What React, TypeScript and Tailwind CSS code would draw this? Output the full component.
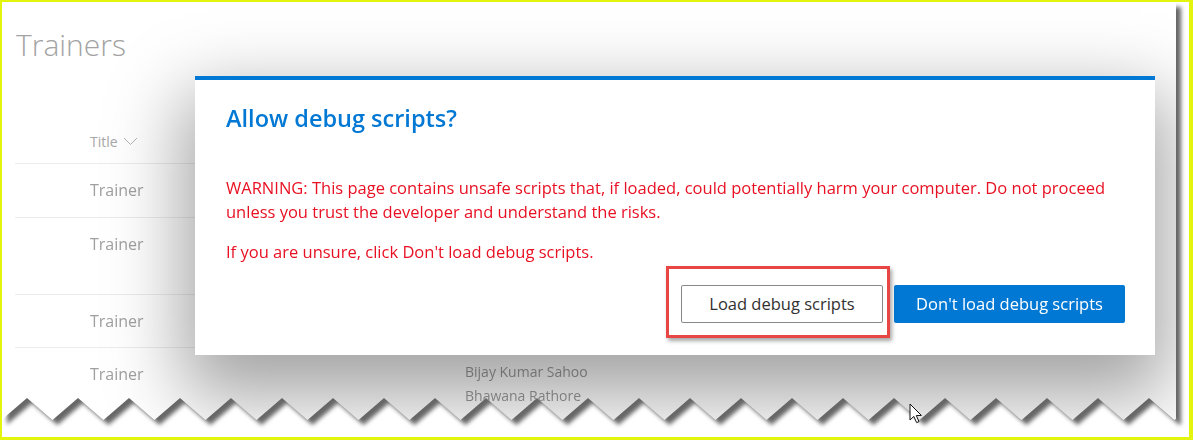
import type { CSSProperties } from 'react'

// torn bottom edge of the captured page: peaks every 51px
const PAPER_W = 1174

function edgeY(x: number) {
  const p = ((((x - 25) % 51) + 51) % 51) / 51
  return p < 0.5 ? 396 + 44 * p : 396 + 44 * (1 - p)
}

function tornClip(): CSSProperties {
  const pts: string[] = ['0px 0px', `${PAPER_W}px 0px`, `${PAPER_W}px ${edgeY(PAPER_W)}px`]
  const xs: number[] = []
  for (let k = -1; k < 24; k++) {
    xs.push(25 + 51 * k, 50.5 + 51 * k)
  }
  xs.filter((x) => x > 0 && x < PAPER_W)
    .sort((a, b) => b - a)
    .forEach((x) => pts.push(`${x}px ${edgeY(x)}px`))
  pts.push(`0px ${edgeY(0)}px`)
  return { clipPath: `polygon(${pts.join(', ')})` }
}

const rows = [
  { h: 'h-[54px]', names: [] as string[] },
  { h: 'h-[77px]', names: [] as string[] },
  { h: 'h-[53px]', names: [] as string[] },
  { h: 'h-[90px]', names: ['Bijay Kumar Sahoo', 'Bhawana Rathore'] },
]

function Chevron() {
  return (
    <svg width="15" height="9" viewBox="0 0 15 9" className="ml-[5px] -mt-[2px]">
      <polyline points="1,1 7.5,7.5 14,1" fill="none" stroke="#b3b3b3" strokeWidth="1" />
    </svg>
  )
}

function Cursor() {
  return (
    <svg width="14" height="21" viewBox="0 0 14 21" className="absolute left-[907px] top-[401px]">
      <path
        d="M1 1 L1 17 L4.8 13.4 L7.6 19.6 L10 18.6 L7.3 12.6 L12.4 12.4 Z"
        fill="#fff"
        stroke="#111"
        strokeWidth="1"
        strokeLinejoin="miter"
      />
    </svg>
  )
}

function DebugDialog() {
  return (
    <div className="absolute left-[193px] top-[74px] w-[960px] border-t-4 border-[#0078d4] bg-white pl-[31px] pr-[30px] pb-[32px] pt-[23px] shadow-[0_30px_70px_12px_rgba(0,0,0,0.36)]">
      <h2 className="text-[23.5px] leading-[30px] font-semibold text-[#0078d4]">Allow debug scripts?</h2>
      <div className="mt-[43px] text-[16.5px] leading-[24px] text-[#e81123]">
        <p>
          WARNING: This page contains unsafe scripts that, if loaded, could potentially harm your computer. Do not
          proceed unless you trust the developer and understand the risks.
        </p>
        <p className="mt-[16px]">If you are unsure, click Don't load debug scripts.</p>
      </div>
      <div className="mt-[21px] flex justify-end gap-[11px]">
        <div className="relative">
          <button className="h-[38px] w-[202px] rounded-[2px] border border-[#8a8886] bg-white text-[16.5px] font-medium text-[#323130]">
            Load debug scripts
          </button>
          <div className="pointer-events-none absolute -bottom-[15px] -left-[15px] -right-[7px] -top-[19px] border-[3px] border-[#e84545] shadow-[2px_3px_4px_rgba(0,0,0,0.35)]" />
        </div>
        <button className="h-[38px] w-[231px] rounded-[2px] bg-[#0078d4] text-[16.5px] font-medium text-white">
          Don't load debug scripts
        </button>
      </div>
    </div>
  )
}

export default function App() {
  return (
    <div className="relative h-[440px] w-[1193px] overflow-hidden border-b-[3px] border-l-2 border-r-4 border-t-2 border-[#e3f50c] bg-white font-['Open_Sans','Noto_Sans',sans-serif]">
      <div className="[filter:drop-shadow(5px_5px_2px_rgba(0,0,0,0.6))]">
        <div className="relative h-[430px] w-[1174px] bg-white" style={tornClip()}>
          <h1 className="pl-[14px] pt-[23px] text-[30px] leading-[40px] font-light text-[#a3a3a3]">Trainers</h1>

          <div className="ml-[13px] w-[1100px]">
            <div className="flex h-[98px] items-end pb-[11px] pl-[75px] text-[14px] leading-[20px] text-[#a8a8a8]">
              <div className="flex items-center">
                <span>Title</span>
                <Chevron />
              </div>
            </div>
            {rows.map((row, i) => (
              <div key={i} className={`flex border-t border-[#ececec] ${row.h}`}>
                <div className="w-[450px] pl-[75px] pt-[16px] text-[16px] leading-[20px] text-[#a0a0a0]">Trainer</div>
                <div className="pt-[12px] text-[14px] leading-[24px] text-[#9c9c9c]">
                  {row.names.map((n) => (
                    <div key={n}>{n}</div>
                  ))}
                </div>
              </div>
            ))}
          </div>

          <DebugDialog />
        </div>
      </div>
      <Cursor />
    </div>
  )
}
